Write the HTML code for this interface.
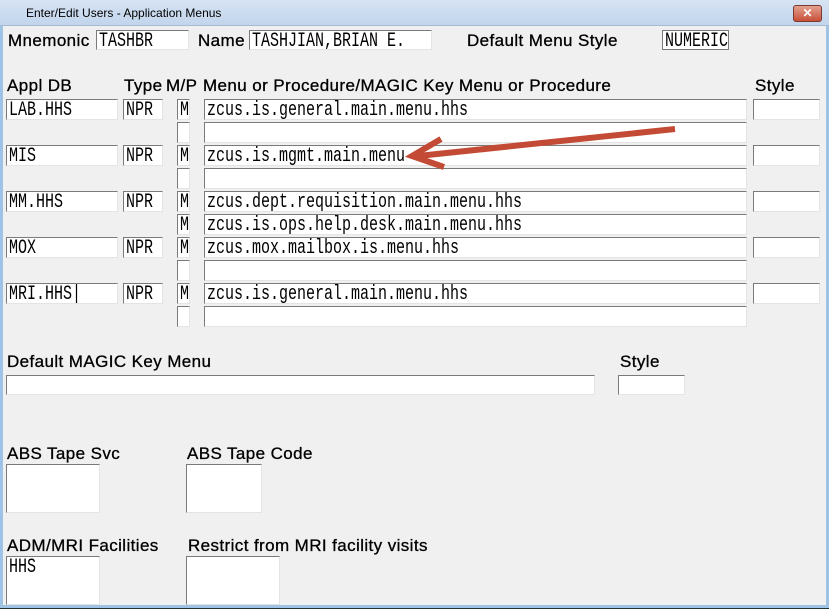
<!DOCTYPE html>
<html><head><meta charset="utf-8"><style>
*{margin:0;padding:0;box-sizing:border-box}
body{width:829px;height:609px;overflow:hidden;background:#f0f0f0;position:relative;font-family:"Liberation Sans",Arial,sans-serif}
.tb{position:absolute;left:0;top:0;width:829px;height:26px;background:linear-gradient(#d6e3f3,#c2d5ec);border-bottom:1px solid #aabbd0}
.tt{position:absolute;left:26px;top:6px;font-size:12px;color:#000}
.x{position:absolute;left:793px;top:5px;width:29px;height:17px;border:1px solid #7a3a30;border-radius:3px;background:linear-gradient(#e3a08e,#c8503a);color:#fff;font-size:12px;font-weight:bold;text-align:center;line-height:15px}
.lb{position:absolute;font-size:17px;letter-spacing:0.4px;color:#000;white-space:nowrap;-webkit-text-stroke:0.3px #000}
.f{position:absolute;background:#fff;border-top:1px solid #7a7a7a;border-left:1px solid #7a7a7a;border-right:1px solid #e4e4e4;border-bottom:1px solid #e4e4e4;white-space:nowrap;overflow:hidden;color:#000}
.f span{display:inline-block;font-family:"Liberation Mono",monospace;font-size:20px;line-height:20px;transform:scaleX(0.75);transform-origin:0 0;margin-left:2px;margin-top:1px}
.lft{position:absolute;left:0;top:26px;width:3px;height:583px;background:#9ec3e4}
.bot{position:absolute;left:0;top:605px;width:829px;height:4px;background:#9ec3e4;border-bottom:1px solid #233}
.rgt{position:absolute;left:826px;top:26px;width:3px;height:583px;background:#9ec3e4}
</style></head><body>
<div class="tb"><div class="tt">Enter/Edit Users - Application Menus</div><div class="x">✕</div></div>
<div class="lft"></div><div class="rgt"></div><div class="bot"></div>

<div class="lb" style="left:8px;top:31px">Mnemonic</div>
<div class="f" style="left:96px;top:30px;width:93px;height:20px"><span>TASHBR</span></div>
<div class="lb" style="left:198px;top:31px">Name</div>
<div class="f" style="left:249px;top:30px;width:183px;height:20px"><span>TASHJIAN,BRIAN E.</span></div>
<div class="lb" style="left:467px;top:31px">Default Menu Style</div>
<div class="f" style="left:662px;top:30px;width:67px;height:20px;border-right-color:#7a7a7a;border-bottom-color:#7a7a7a"><span>NUMERIC</span></div>

<div class="lb" style="left:7px;top:76px">Appl DB</div>
<div class="lb" style="left:124px;top:76px">Type</div>
<div class="lb" style="left:166px;top:76px">M/P</div>
<div class="lb" style="left:203px;top:76px">Menu or Procedure/MAGIC Key Menu or Procedure</div>
<div class="lb" style="left:755px;top:76px">Style</div>

<div class="f" style="left:6px;top:99px;width:112px;height:21px"><span>LAB.HHS</span></div>
<div class="f" style="left:123px;top:99px;width:40px;height:21px"><span>NPR</span></div>
<div class="f" style="left:177px;top:99px;width:13px;height:21px"><span>M</span></div>
<div class="f" style="left:204px;top:99px;width:543px;height:21px"><span>zcus.is.general.main.menu.hhs</span></div>
<div class="f" style="left:753px;top:99px;width:67px;height:21px"></div>

<div class="f" style="left:177px;top:122px;width:13px;height:21px"></div>
<div class="f" style="left:204px;top:122px;width:543px;height:21px"></div>

<div class="f" style="left:6px;top:145px;width:112px;height:21px"><span>MIS</span></div>
<div class="f" style="left:123px;top:145px;width:40px;height:21px"><span>NPR</span></div>
<div class="f" style="left:177px;top:145px;width:13px;height:21px"><span>M</span></div>
<div class="f" style="left:204px;top:145px;width:543px;height:21px"><span>zcus.is.mgmt.main.menu</span></div>
<div class="f" style="left:753px;top:145px;width:67px;height:21px"></div>

<div class="f" style="left:177px;top:168px;width:13px;height:21px"></div>
<div class="f" style="left:204px;top:168px;width:543px;height:21px"></div>

<div class="f" style="left:6px;top:191px;width:112px;height:21px"><span>MM.HHS</span></div>
<div class="f" style="left:123px;top:191px;width:40px;height:21px"><span>NPR</span></div>
<div class="f" style="left:177px;top:191px;width:13px;height:21px"><span>M</span></div>
<div class="f" style="left:204px;top:191px;width:543px;height:21px"><span>zcus.dept.requisition.main.menu.hhs</span></div>
<div class="f" style="left:753px;top:191px;width:67px;height:21px"></div>

<div class="f" style="left:177px;top:214px;width:13px;height:21px"><span>M</span></div>
<div class="f" style="left:204px;top:214px;width:543px;height:21px"><span>zcus.is.ops.help.desk.main.menu.hhs</span></div>

<div class="f" style="left:6px;top:237px;width:112px;height:21px"><span>MOX</span></div>
<div class="f" style="left:123px;top:237px;width:40px;height:21px"><span>NPR</span></div>
<div class="f" style="left:177px;top:237px;width:13px;height:21px"><span>M</span></div>
<div class="f" style="left:204px;top:237px;width:543px;height:21px"><span>zcus.mox.mailbox.is.menu.hhs</span></div>
<div class="f" style="left:753px;top:237px;width:67px;height:21px"></div>

<div class="f" style="left:177px;top:260px;width:13px;height:21px"></div>
<div class="f" style="left:204px;top:260px;width:543px;height:21px"></div>

<div class="f" style="left:6px;top:283px;width:112px;height:21px"><span>MRI.HHS|</span></div>
<div class="f" style="left:123px;top:283px;width:40px;height:21px"><span>NPR</span></div>
<div class="f" style="left:177px;top:283px;width:13px;height:21px"><span>M</span></div>
<div class="f" style="left:204px;top:283px;width:543px;height:21px"><span>zcus.is.general.main.menu.hhs</span></div>
<div class="f" style="left:753px;top:283px;width:67px;height:21px"></div>

<div class="f" style="left:177px;top:306px;width:13px;height:21px"></div>
<div class="f" style="left:204px;top:306px;width:543px;height:21px"></div>

<div class="lb" style="left:7px;top:352px">Default MAGIC Key Menu</div>
<div class="lb" style="left:620px;top:352px">Style</div>
<div class="f" style="left:6px;top:375px;width:589px;height:20px"></div>
<div class="f" style="left:618px;top:375px;width:67px;height:20px"></div>

<div class="lb" style="left:7px;top:444px">ABS Tape Svc</div>
<div class="lb" style="left:187px;top:444px">ABS Tape Code</div>
<div class="f" style="left:6px;top:464px;width:94px;height:49px"></div>
<div class="f" style="left:186px;top:464px;width:76px;height:49px"></div>

<div class="lb" style="left:7px;top:536px">ADM/MRI Facilities</div>
<div class="lb" style="left:188px;top:536px">Restrict from MRI facility visits</div>
<div class="f" style="left:6px;top:556px;width:94px;height:49px"><span>HHS</span></div>
<div class="f" style="left:186px;top:556px;width:94px;height:49px"></div>

<svg style="position:absolute;left:0;top:0" width="829" height="609">
<g stroke="#c34b35" stroke-width="6" fill="none" stroke-linecap="butt" stroke-linejoin="miter">
<line x1="675" y1="129" x2="418" y2="156"/>
<polyline points="441,139 412,156 444,167"/>
</g>
</svg>
</body></html>
